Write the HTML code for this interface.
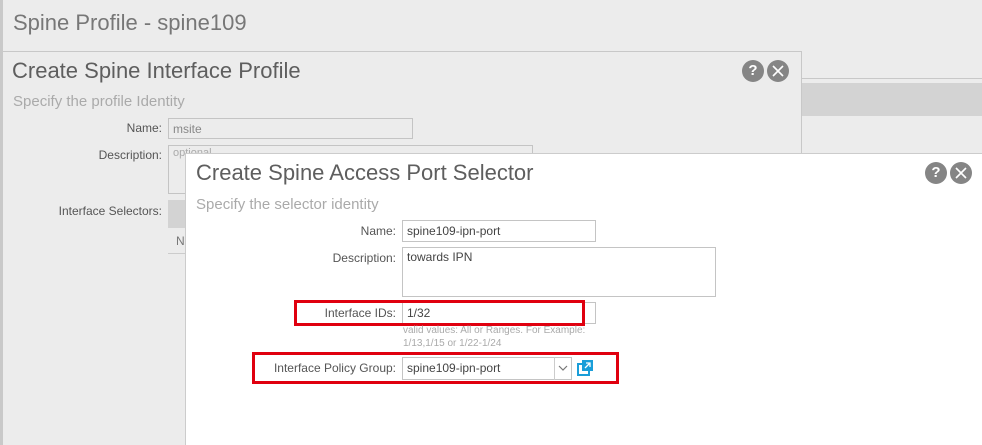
<!DOCTYPE html>
<html><head><style>
*{margin:0;padding:0;box-sizing:border-box}
body{width:982px;height:445px;overflow:hidden;background:#ececec;font-family:"Liberation Sans",sans-serif;position:relative}
.a{position:absolute}
.t{color:#5e5e5e;font-size:22px;white-space:nowrap}
.s{color:#aaa;font-size:15px;white-space:nowrap}
.l{color:#555;font-size:12px;text-align:right;white-space:nowrap}
.in{border:1px solid #c4c4c4;font-size:12px;color:#444;padding:3px 4px;white-space:nowrap}
.ic{width:22px;height:22px;border-radius:50%;background:#858585;color:#fff;text-align:center;font-weight:bold;font-size:15px;line-height:22px}
</style></head><body>
<div class="a" style="left:0;top:0;width:3px;height:445px;background:#c9c9c9"></div>
<div class="a t" style="left:13px;top:10px;color:#777">Spine Profile - spine109</div>
<div class="a" style="left:3px;top:51px;width:799px;height:1px;background:#c8c8c8"></div>
<div class="a" style="left:801px;top:51px;width:1px;height:102px;background:#c8c8c8"></div>
<div class="a" style="left:801px;top:78px;width:181px;height:1px;background:#c8c8c8"></div>
<div class="a" style="left:802px;top:83px;width:180px;height:33px;background:#d3d3d3"></div>
<div class="a t" style="left:12px;top:58px">Create Spine Interface Profile</div>
<div class="a ic" style="left:742px;top:60px">?</div>
<div class="a ic" style="left:767px;top:60px"><svg width="22" height="22"><path d="M6 6L16 16M16 6L6 16" stroke="#fff" stroke-width="1.6"/></svg></div>
<div class="a s" style="left:13px;top:93px">Specify the profile Identity</div>
<div class="a l" style="left:60px;top:121px;width:102px">Name:</div>
<div class="a in" style="left:168px;top:118px;width:245px;height:21px;color:#888">msite</div>
<div class="a l" style="left:60px;top:148px;width:102px">Description:</div>
<div class="a in" style="left:168px;top:145px;width:365px;height:49px;color:#aaa;font-size:11px;padding-top:1px">optional</div>
<div class="a l" style="left:20px;top:204px;width:142px">Interface Selectors:</div>
<div class="a" style="left:168px;top:200px;width:20px;height:28px;background:#d3d3d3"></div>
<div class="a" style="left:176px;top:234px;font-size:12px;color:#777">N</div>
<div class="a" style="left:168px;top:253px;width:20px;height:1px;background:#ccc"></div>
<div class="a" style="left:185px;top:153px;width:797px;height:292px;background:#fff;border-left:1px solid #ccc;border-top:1px solid #ccc"></div>
<div class="a t" style="left:196px;top:160px">Create Spine Access Port Selector</div>
<div class="a ic" style="left:925px;top:162px">?</div>
<div class="a ic" style="left:950px;top:162px"><svg width="22" height="22"><path d="M6 6L16 16M16 6L6 16" stroke="#fff" stroke-width="1.6"/></svg></div>
<div class="a s" style="left:196px;top:196px">Specify the selector identity</div>
<div class="a l" style="left:296px;top:224px;width:100px">Name:</div>
<div class="a in" style="left:402px;top:220px;width:194px;height:22px">spine109-ipn-port</div>
<div class="a l" style="left:296px;top:251px;width:100px">Description:</div>
<div class="a in" style="left:402px;top:247px;width:314px;height:50px;padding-top:2px">towards IPN</div>
<div class="a l" style="left:296px;top:306px;width:100px">Interface IDs:</div>
<div class="a in" style="left:402px;top:302px;width:194px;height:22px">1/32</div>
<div class="a" style="left:294px;top:300px;width:291px;height:26px;border:3px solid #e0000f"></div>
<div class="a" style="left:403px;top:324px;font-size:10px;color:#aaa;line-height:13px">valid values: All or Ranges. For Example:<br>1/13,1/15 or 1/22-1/24</div>
<div class="a l" style="left:240px;top:361px;width:156px">Interface Policy Group:</div>
<div class="a in" style="left:402px;top:357px;width:170px;height:23px">spine109-ipn-port</div>
<div class="a" style="left:554px;top:357px;width:1px;height:23px;background:#ccc"></div>
<svg class="a" style="left:557px;top:363px" width="12" height="10"><path d="M2 3L6 7L10 3" stroke="#777" fill="none" stroke-width="1.2"/></svg>
<svg class="a" style="left:577px;top:359px" width="17" height="17"><rect x="1" y="5" width="11" height="11" fill="none" stroke="#1a9ed9" stroke-width="2"/><rect x="5" y="1" width="11" height="11" fill="#1a9ed9"/><path d="M8 9L13 4M9 4H13V8" stroke="#fff" stroke-width="1.3" fill="none"/></svg>
<div class="a" style="left:252px;top:352px;width:367px;height:32px;border:3px solid #e0000f"></div>
</body></html>
